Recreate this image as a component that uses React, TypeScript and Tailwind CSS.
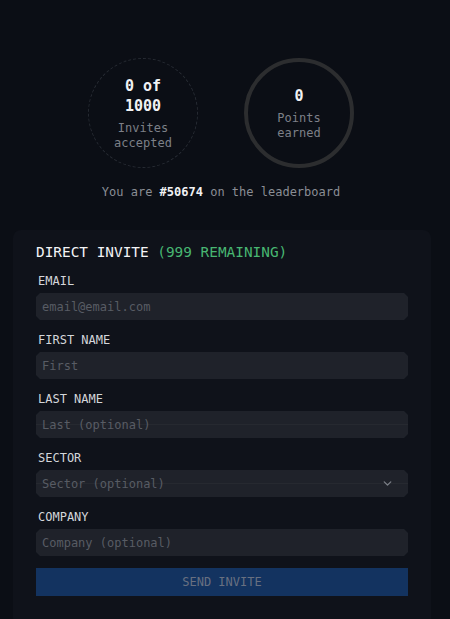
import { ChevronDown } from "lucide-react";

const mono = { fontFamily: '"DejaVu Sans Mono", "Liberation Mono", monospace' };

// chamfered corners like the reference inputs
const chamfer =
  "[clip-path:polygon(4px_0,calc(100%-4px)_0,100%_4px,100%_calc(100%-4px),calc(100%-4px)_100%,4px_100%,0_calc(100%-4px),0_4px)]";

function Field({
  label,
  placeholder,
  select,
  line,
}: {
  label: string;
  placeholder: string;
  select?: boolean;
  line?: boolean;
}) {
  return (
    <div className="flex flex-col">
      <label className="text-[12px] leading-[16px] text-[#d4d6da] mb-[4px] pl-[2px]">{label}</label>
      <div className={`relative h-[27px] bg-[#1f222a] ${chamfer} flex items-center pl-[6px] pr-[14px]`}>
        {line && <div className="absolute left-0 right-0 top-[13px] h-px bg-[#262930]" />}
        <span className="relative text-[12px] text-[#585c64]">{placeholder}</span>
        {select && (
          <ChevronDown className="relative ml-auto text-[#7a7e86]" size={13} strokeWidth={2.5} />
        )}
      </div>
    </div>
  );
}

export default function App() {
  return (
    <div className="min-h-[619px] w-[450px] bg-[#0b0e15] overflow-hidden" style={mono}>
      <div className="w-[442px] pt-[58px] flex flex-col items-center">
        <div className="flex gap-[46px]">
          <div className="w-[110px] h-[110px] rounded-full border border-dashed border-[#272b33] flex flex-col items-center justify-center">
            <div className="text-[15px] leading-[20px] font-bold text-[#f1f2f4] text-center">
              0 of
              <br />
              1000
            </div>
            <div className="text-[12px] leading-[15px] text-[#7d8088] text-center mt-[5px]">
              Invites
              <br />
              accepted
            </div>
          </div>
          <div className="w-[110px] h-[110px] rounded-full border-[4px] border-[#2c2d2f] flex flex-col items-center justify-center">
            <div className="text-[15px] leading-[20px] font-bold text-[#f1f2f4]">0</div>
            <div className="text-[12px] leading-[15px] text-[#7d8088] text-center mt-[5px]">
              Points
              <br />
              earned
            </div>
          </div>
        </div>
        <div className="mt-[16px] text-[12px] leading-[16px] text-[#8a8d94]">
          You are <span className="font-bold text-[#f1f2f4]">#50674</span> on the leaderboard
        </div>
      </div>

      <div className="ml-[13px] w-[418px] mt-[30px] rounded-[8px] bg-[#0f121a] px-[23px] pt-[12px] pb-[30px]">
        <h2 className="text-[14.4px] leading-[20px] text-[#f3f4f6] mb-[11px]">
          DIRECT INVITE <span className="text-[#48b772]">(999 REMAINING)</span>
        </h2>
        <div className="flex flex-col gap-[12px]">
          <Field label="EMAIL" placeholder="email@email.com" />
          <Field label="FIRST NAME" placeholder="First" />
          <Field label="LAST NAME" placeholder="Last (optional)" line />
          <Field label="SECTOR" placeholder="Sector (optional)" select line />
          <Field label="COMPANY" placeholder="Company (optional)" />
          <button className="h-[28px] bg-[#133360] text-[12px] text-[#687080] tracking-normal">
            SEND INVITE
          </button>
        </div>
      </div>
    </div>
  );
}
